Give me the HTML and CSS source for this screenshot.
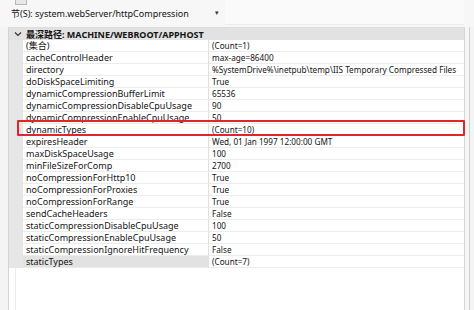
FILE: index.html
```html
<!DOCTYPE html>
<html lang="zh-CN">
<head>
  <meta charset="UTF-8">
  <title>httpCompression</title>
  <link rel="stylesheet" href="styles.css">
</head>
<body>
  <div class="window">
    <!-- section selector -->
    <div class="toolbar">
      <span class="toolbar-icon"></span>
      <span class="section-label">节(S):</span>
      <div class="combo">
        <span class="combo-text">system.webServer/httpCompression</span>
        <span class="combo-arrow">▾</span>
        <span class="combo-rest"></span>
      </div>
    </div>

    <div class="grid-wrap">
      <div class="grid">
        <div class="group-row">
          <span class="chevron">
            <svg width="8" height="6" viewBox="0 0 8 6"><path d="M1 1.5 L4 4.5 L7 1.5" fill="none" stroke="#333" stroke-width="1.2"/></svg>
          </span>
          <span class="group-title">最深路径: MACHINE/WEBROOT/APPHOST</span>
        </div>
        <div id="rows"></div>
        <div class="grid-empty">
          <div class="gutter-empty"></div>
        </div>
      </div>
      <div class="scroll-strip"></div>
    </div>
  </div>

  <script>
    const props = [
      ["(集合)", "(Count=1)"],
      ["cacheControlHeader", "max-age=86400"],
      ["directory", "%SystemDrive%\\inetpub\\temp\\IIS Temporary Compressed Files"],
      ["doDiskSpaceLimiting", "True"],
      ["dynamicCompressionBufferLimit", "65536"],
      ["dynamicCompressionDisableCpuUsage", "90"],
      ["dynamicCompressionEnableCpuUsage", "50"],
      ["dynamicTypes", "(Count=10)", "marked"],
      ["expiresHeader", "Wed, 01 Jan 1997 12:00:00 GMT"],
      ["maxDiskSpaceUsage", "100"],
      ["minFileSizeForComp", "2700"],
      ["noCompressionForHttp10", "True"],
      ["noCompressionForProxies", "True"],
      ["noCompressionForRange", "True"],
      ["sendCacheHeaders", "False"],
      ["staticCompressionDisableCpuUsage", "100"],
      ["staticCompressionEnableCpuUsage", "50"],
      ["staticCompressionIgnoreHitFrequency", "False"],
      ["staticTypes", "(Count=7)", "selected"]
    ];

    const rows = document.getElementById("rows");
    for (const [name, value, state] of props) {
      const row = document.createElement("div");
      row.className = "prop-row" + (state ? " " + state : "");
      row.innerHTML =
        '<span class="gutter"></span>' +
        '<span class="prop-name"></span>' +
        '<span class="prop-value"></span>';
      row.querySelector(".prop-name").textContent = name;
      row.querySelector(".prop-value").textContent = value;
      rows.appendChild(row);
    }
  </script>
</body>
</html>
```

FILE: styles.css
```css
body {
  margin: 0;
  padding: 0;
  background-color: #f4f4f4;
  font-family: "Noto Sans", "Noto Sans CJK SC", sans-serif;
  font-size: 9px;
  color: #141414;
}
.window {
  width: 474px;
  height: 310px;
  display: flex;
  flex-direction: column;
  overflow: hidden;
}

/* Section selector */
.toolbar {
  height: 27px;
  display: flex;
  align-items: flex-start;
  position: relative;
  background-color: #f7f7f7;
}
.toolbar-icon {
  position: absolute;
  left: 15px;
  top: -3px;
  width: 10px;
  height: 6px;
  border: 1px solid #b8b8b8;
  background-color: #e8e8e8;
}
.section-label {
  margin-left: 11px;
  width: 24px;
  margin-top: 7px;
}
.combo {
  flex: 1;
  display: flex;
  align-items: flex-start;
  height: 25px;
  margin-right: 10px;
}
.combo-text {
  width: 180px;
  margin-top: 7px;
}
.combo-arrow {
  width: 10px;
  margin-top: 8px;
  font-size: 7px;
  color: #333;
}
.combo-rest {
  flex: 1;
  align-self: stretch;
  background-color: #fafafa;
  border-bottom: 1px solid #ececec;
}

/* Property grid */
.grid-wrap {
  flex: 1;
  display: flex;
  padding-left: 8px;
}
.grid {
  width: 455px;
  display: flex;
  flex-direction: column;
  background-color: #fff;
  border-left: 1px solid #d4d4d4;
  border-top: 1px solid #dcdcdc;
  border-right: 1px solid #d4d4d4;
}
.scroll-strip {
  width: 4px;
  border-right: 1px solid #cfcfcf;
  background-color: #f7f7f7;
}
.group-row {
  height: 12px;
  line-height: 12px;
  display: flex;
  align-items: center;
  overflow: hidden;
  background-color: #e2e2e2;
  font-weight: bold;
}
.chevron {
  width: 17px;
  height: 12px;
  display: flex;
  align-items: center;
  justify-content: center;
}
.group-title {
  height: 12px;
  padding-top: 1px;
}
.prop-row {
  height: 12px;
  display: flex;
  position: relative;
  line-height: 12px;
}
.gutter {
  width: 14px;
  background-color: #e6e6e6;
}
.prop-name {
  width: 182px;
  height: 11px;
  padding-left: 3px;
  border-bottom: 1px solid #ececec;
  border-right: 1px solid #e0e0e0;
  white-space: nowrap;
  overflow: hidden;
}
.prop-value {
  flex: 1;
  height: 11px;
  padding-left: 3px;
  border-bottom: 1px solid #ececec;
  font-size: 8.2px;
  white-space: nowrap;
  overflow: hidden;
}
.prop-row.selected .prop-name {
  background-color: #e2e2e2;
}
.prop-row.marked::after {
  content: "";
  position: absolute;
  left: 8px;
  right: -1px;
  top: -4px;
  bottom: 0;
  border: 2px solid #e0262b;
  border-radius: 1px;
}
.grid-empty {
  flex: 1;
  display: flex;
}
.gutter-empty {
  width: 6px;
  border-right: 1px solid #ececec;
}
```
